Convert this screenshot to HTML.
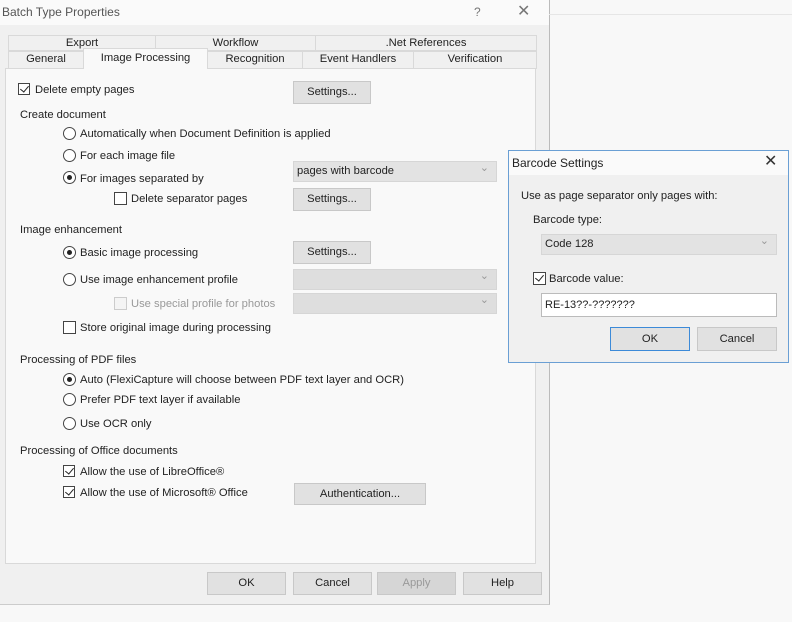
<!DOCTYPE html>
<html><head><meta charset="utf-8"><style>
body{margin:0;width:792px;height:622px;background:#f8f8f8;font-family:"Liberation Sans",sans-serif;font-size:11.2px;color:#222;position:relative;overflow:hidden}
.a{position:absolute;white-space:nowrap}
.t{position:absolute;white-space:nowrap;line-height:14px}
.btn{position:absolute;background:#e1e1e1;border:1px solid #c8c8c8;box-sizing:border-box;text-align:center;line-height:20px}
.dd{position:absolute;background:#e3e3e3;border:1px solid #d6d6d6;box-sizing:border-box;line-height:19px;padding-left:3px}
.dd:after{content:"⌄";position:absolute;right:7px;top:-3px;color:#999;font-size:11px}
.cb{position:absolute;width:12px;height:12px;border:1px solid #444;background:#fff;box-sizing:border-box}
.rb{position:absolute;width:13px;height:13px;border:1px solid #444;border-radius:50%;background:#fff;box-sizing:border-box}
.rb.on:after{content:"";position:absolute;left:3px;top:3px;width:5px;height:5px;border-radius:50%;background:#222}
.chk:after{content:"";position:absolute;left:3px;top:0px;width:4px;height:7px;border:solid #222;border-width:0 1.5px 1.5px 0;transform:rotate(40deg)}
.tab{position:absolute;background:#f0f0f0;border:1px solid #d9d9d9;box-sizing:border-box;text-align:center;line-height:15px}
</style></head><body>
<div class="a" style="left:0;top:0;width:549px;height:604px;background:#f0f0f0;border-right:1px solid #bbb;border-bottom:1px solid #ccc"></div>
<div class="a" style="left:0;top:0;width:549px;height:25px;background:#fafafa"></div>
<div class="a" style="left:549px;top:14px;width:243px;height:1px;background:#e6e6e6"></div>
<div class="t" style="left:2px;top:5px;color:#555;font-size:12px">Batch Type Properties</div>
<div class="t" style="left:474px;top:5px;color:#777;font-size:12px">?</div>
<div class="t" style="left:517px;top:5px;color:#777;font-size:16px">✕</div>
<div class="tab" style="left:8px;top:35px;width:148px;height:16px">Export</div>
<div class="tab" style="left:155px;top:35px;width:161px;height:16px">Workflow</div>
<div class="tab" style="left:315px;top:35px;width:222px;height:16px">.Net References</div>
<div class="a" style="left:5px;top:68px;width:531px;height:496px;background:#f9f9f9;border:1px solid #d9d9d9;box-sizing:border-box"></div>
<div class="tab" style="left:8px;top:51px;width:76px;height:18px">General</div>
<div class="tab" style="left:207px;top:51px;width:96px;height:18px">Recognition</div>
<div class="tab" style="left:302px;top:51px;width:112px;height:18px">Event Handlers</div>
<div class="tab" style="left:413px;top:51px;width:124px;height:18px">Verification</div>
<div class="tab" style="left:83px;top:48px;width:125px;height:21px;background:#f9f9f9;border-bottom:none;line-height:19px">Image Processing</div>

<div class="cb chk" style="left:18px;top:83px"></div><div class="t" style="left:35px;top:83px">Delete empty pages</div>
<div class="btn" style="left:293px;top:81px;width:78px;height:23px">Settings...</div>
<div class="t" style="left:20px;top:108px">Create document</div>
<div class="rb" style="left:63px;top:127px"></div><div class="t" style="left:80px;top:127px">Automatically when Document Definition is applied</div>
<div class="rb" style="left:63px;top:149px"></div><div class="t" style="left:80px;top:149px">For each image file</div>
<div class="rb on" style="left:63px;top:171px"></div><div class="t" style="left:80px;top:172px">For images separated by</div>
<div class="dd" style="left:293px;top:161px;width:204px;height:21px">pages with barcode</div>
<div class="cb" style="left:114px;top:192px;width:13px;height:13px"></div><div class="t" style="left:131px;top:192px">Delete separator pages</div>
<div class="btn" style="left:293px;top:188px;width:78px;height:23px">Settings...</div>
<div class="t" style="left:20px;top:223px">Image enhancement</div>
<div class="rb on" style="left:63px;top:246px"></div><div class="t" style="left:80px;top:246px">Basic image processing</div>
<div class="btn" style="left:293px;top:241px;width:78px;height:23px">Settings...</div>
<div class="rb" style="left:63px;top:273px"></div><div class="t" style="left:80px;top:273px">Use image enhancement profile</div>
<div class="dd" style="left:293px;top:269px;width:204px;height:21px;background:#dedede"></div>
<div class="cb" style="left:114px;top:297px;width:13px;height:13px;border-color:#ccc;background:#f4f4f4"></div><div class="t" style="left:131px;top:297px;color:#999">Use special profile for photos</div>
<div class="dd" style="left:293px;top:293px;width:204px;height:21px;background:#dedede"></div>
<div class="cb" style="left:63px;top:321px;width:13px;height:13px"></div><div class="t" style="left:80px;top:321px">Store original image during processing</div>
<div class="t" style="left:20px;top:353px">Processing of PDF files</div>
<div class="rb on" style="left:63px;top:373px"></div><div class="t" style="left:80px;top:373px">Auto (FlexiCapture will choose between PDF text layer and OCR)</div>
<div class="rb" style="left:63px;top:393px"></div><div class="t" style="left:80px;top:393px">Prefer PDF text layer if available</div>
<div class="rb" style="left:63px;top:417px"></div><div class="t" style="left:80px;top:417px">Use OCR only</div>
<div class="t" style="left:20px;top:444px">Processing of Office documents</div>
<div class="cb chk" style="left:63px;top:465px"></div><div class="t" style="left:80px;top:465px">Allow the use of LibreOffice®</div>
<div class="cb chk" style="left:63px;top:486px"></div><div class="t" style="left:80px;top:486px">Allow the use of Microsoft® Office</div>
<div class="btn" style="left:294px;top:483px;width:132px;height:22px">Authentication...</div>

<div class="btn" style="left:207px;top:572px;width:79px;height:23px">OK</div>
<div class="btn" style="left:293px;top:572px;width:79px;height:23px">Cancel</div>
<div class="btn" style="left:377px;top:572px;width:79px;height:23px;background:#d6d6d6;color:#999">Apply</div>
<div class="btn" style="left:463px;top:572px;width:79px;height:23px">Help</div>

<div class="a" style="left:508px;top:150px;width:281px;height:213px;background:#f0f0f0;border:1px solid #6a9fd4;box-sizing:border-box"></div>
<div class="a" style="left:509px;top:151px;width:279px;height:24px;background:#fafafa"></div>
<div class="t" style="left:512px;top:156px;font-size:12px">Barcode Settings</div>
<div class="t" style="left:764px;top:155px;font-size:16px;color:#333">✕</div>
<div class="t" style="left:521px;top:189px">Use as page separator only pages with:</div>
<div class="t" style="left:533px;top:213px">Barcode type:</div>
<div class="dd" style="left:541px;top:234px;width:236px;height:21px">Code 128</div>
<div class="cb chk" style="left:533px;top:272px;width:13px;height:13px"></div><div class="t" style="left:549px;top:272px">Barcode value:</div>
<div class="a" style="left:541px;top:293px;width:236px;height:24px;background:#fff;border:1px solid #bbb;box-sizing:border-box;line-height:22px;padding-left:3px;font-size:11px">RE-13??-???????</div>
<div class="btn" style="left:610px;top:327px;width:80px;height:24px;border:1px solid #3c8ad8;line-height:22px">OK</div>
<div class="btn" style="left:697px;top:327px;width:80px;height:24px;line-height:22px">Cancel</div>
</body></html>
